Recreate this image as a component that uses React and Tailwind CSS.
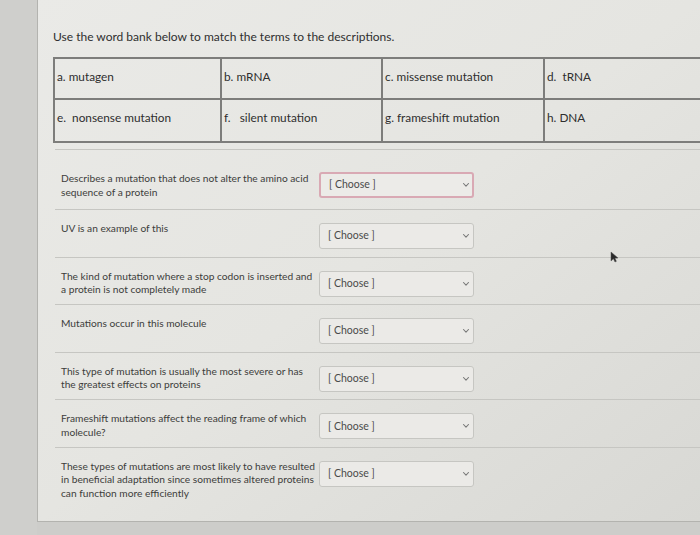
import React from 'react';

const terms = [
  ['a. mutagen', 'b. mRNA', 'c. missense mutation', 'd.  tRNA'],
  ['e.  nonsense mutation', 'f.   silent mutation', 'g. frameshift mutation', 'h. DNA'],
];

const questions = [
  { text: 'Describes a mutation that does not alter the amino acid sequence of a protein', first: true, flagged: true },
  { text: 'UV is an example of this' },
  { text: 'The kind of mutation where a stop codon is inserted and a protein is not completely made' },
  { text: 'Mutations occur in this molecule' },
  { text: 'This type of mutation is usually the most severe or has the greatest effects on proteins' },
  { text: 'Frameshift mutations affect the reading frame of which molecule?' },
  { text: 'These types of mutations are most likely to have resulted in beneficial adaptation since sometimes altered proteins can function more efficiently' },
];

const Chevron = () => (
  <svg width="8" height="6" viewBox="0 0 8 6" fill="none">
    <path d="M1.5 1.5 L4 4.2 L6.5 1.5" stroke="#7a7a7a" strokeWidth="1.1" strokeLinecap="round" strokeLinejoin="round" />
  </svg>
);

const Select = ({ flagged }) => (
  <div
    className={
      flagged
        ? 'w-[155px] h-[26px] shrink-0 flex items-center justify-between pl-[8px] pr-[2px] rounded-[3px] border-2 border-[#d9a9b4] bg-[#ecebe8]'
        : 'w-[155px] h-[26px] shrink-0 flex items-center justify-between pl-[8px] pr-[3px] rounded-[3px] border border-[#c6c6c2] bg-[#ebeae7]'
    }
  >
    <span className="text-[10.5px] text-[#4a4a4a]">[ Choose ]</span>
    <Chevron />
  </div>
);

export default function App() {
  return (
    <div
      className="w-[700px] h-[535px] overflow-hidden flex bg-[#cdcdca]"
      style={{ fontFamily: 'Lato, "Open Sans", sans-serif' }}
    >
      <div className="w-[37px] shrink-0 bg-[#cfcfcc]" />
      <div className="flex-1 min-w-0">
        <div className="relative h-[522px] bg-gradient-to-br from-[#eaeae7] via-[#e5e5e1] to-[#d8d8d4] border-l border-b border-[#b3b3af] pl-[15px] pt-[29px] overflow-hidden">
          <h1 className="text-[12px] text-[#2f2f2f] leading-[16px]">
            Use the word bank below to match the terms to the descriptions.
          </h1>

          {/* word bank */}
          <div className="mt-[12px] w-[720px] border-t-2 border-l-2 border-[#7d7d7b]">
            {terms.map((row, r) => (
              <div key={r} className={r === 0 ? 'flex h-[41px]' : 'flex h-[43px]'}>
                {row.map((t, c) => (
                  <div
                    key={c}
                    className={
                      (c === 0 ? 'w-[167px] ' : c === 1 ? 'w-[161px] ' : c === 2 ? 'w-[162px] ' : 'w-[230px] ') +
                      'shrink-0 border-r-2 border-b-2 border-[#7d7d7b] pl-[2px] pt-[9px] text-[11.8px] text-[#2e2e2e] whitespace-pre'
                    }
                  >
                    {t}
                  </div>
                ))}
              </div>
            ))}
          </div>

          {/* questions */}
          <div className="mt-[6px] ml-[2px]">
            {questions.map((q, i) => (
              <div
                key={i}
                className={
                  (q.first ? 'h-[60px] pt-[22px] ' : 'h-[47.6px] pt-[12px] ') +
                  'flex border-t border-[#c6c6c2] pl-[6px]'
                }
              >
                <p className="w-[258px] shrink-0 text-[10.2px] leading-[13.5px] text-[#3d3d3b]">
                  {q.text}
                </p>
                <div className={q.first ? 'pt-0' : 'pt-[1px]'}>
                  <Select flagged={q.flagged} />
                </div>
              </div>
            ))}
          </div>

          {/* mouse pointer */}
          <svg className="absolute left-[572px] top-[251px]" width="9" height="12" viewBox="0 0 9 12">
            <path d="M1 1 L1 10 L3.4 7.8 L5 11 L6.4 10.3 L4.9 7.2 L8 7 Z" fill="#2a2a2a" stroke="#555" strokeWidth="0.5" />
          </svg>
        </div>
      </div>
    </div>
  );
}
